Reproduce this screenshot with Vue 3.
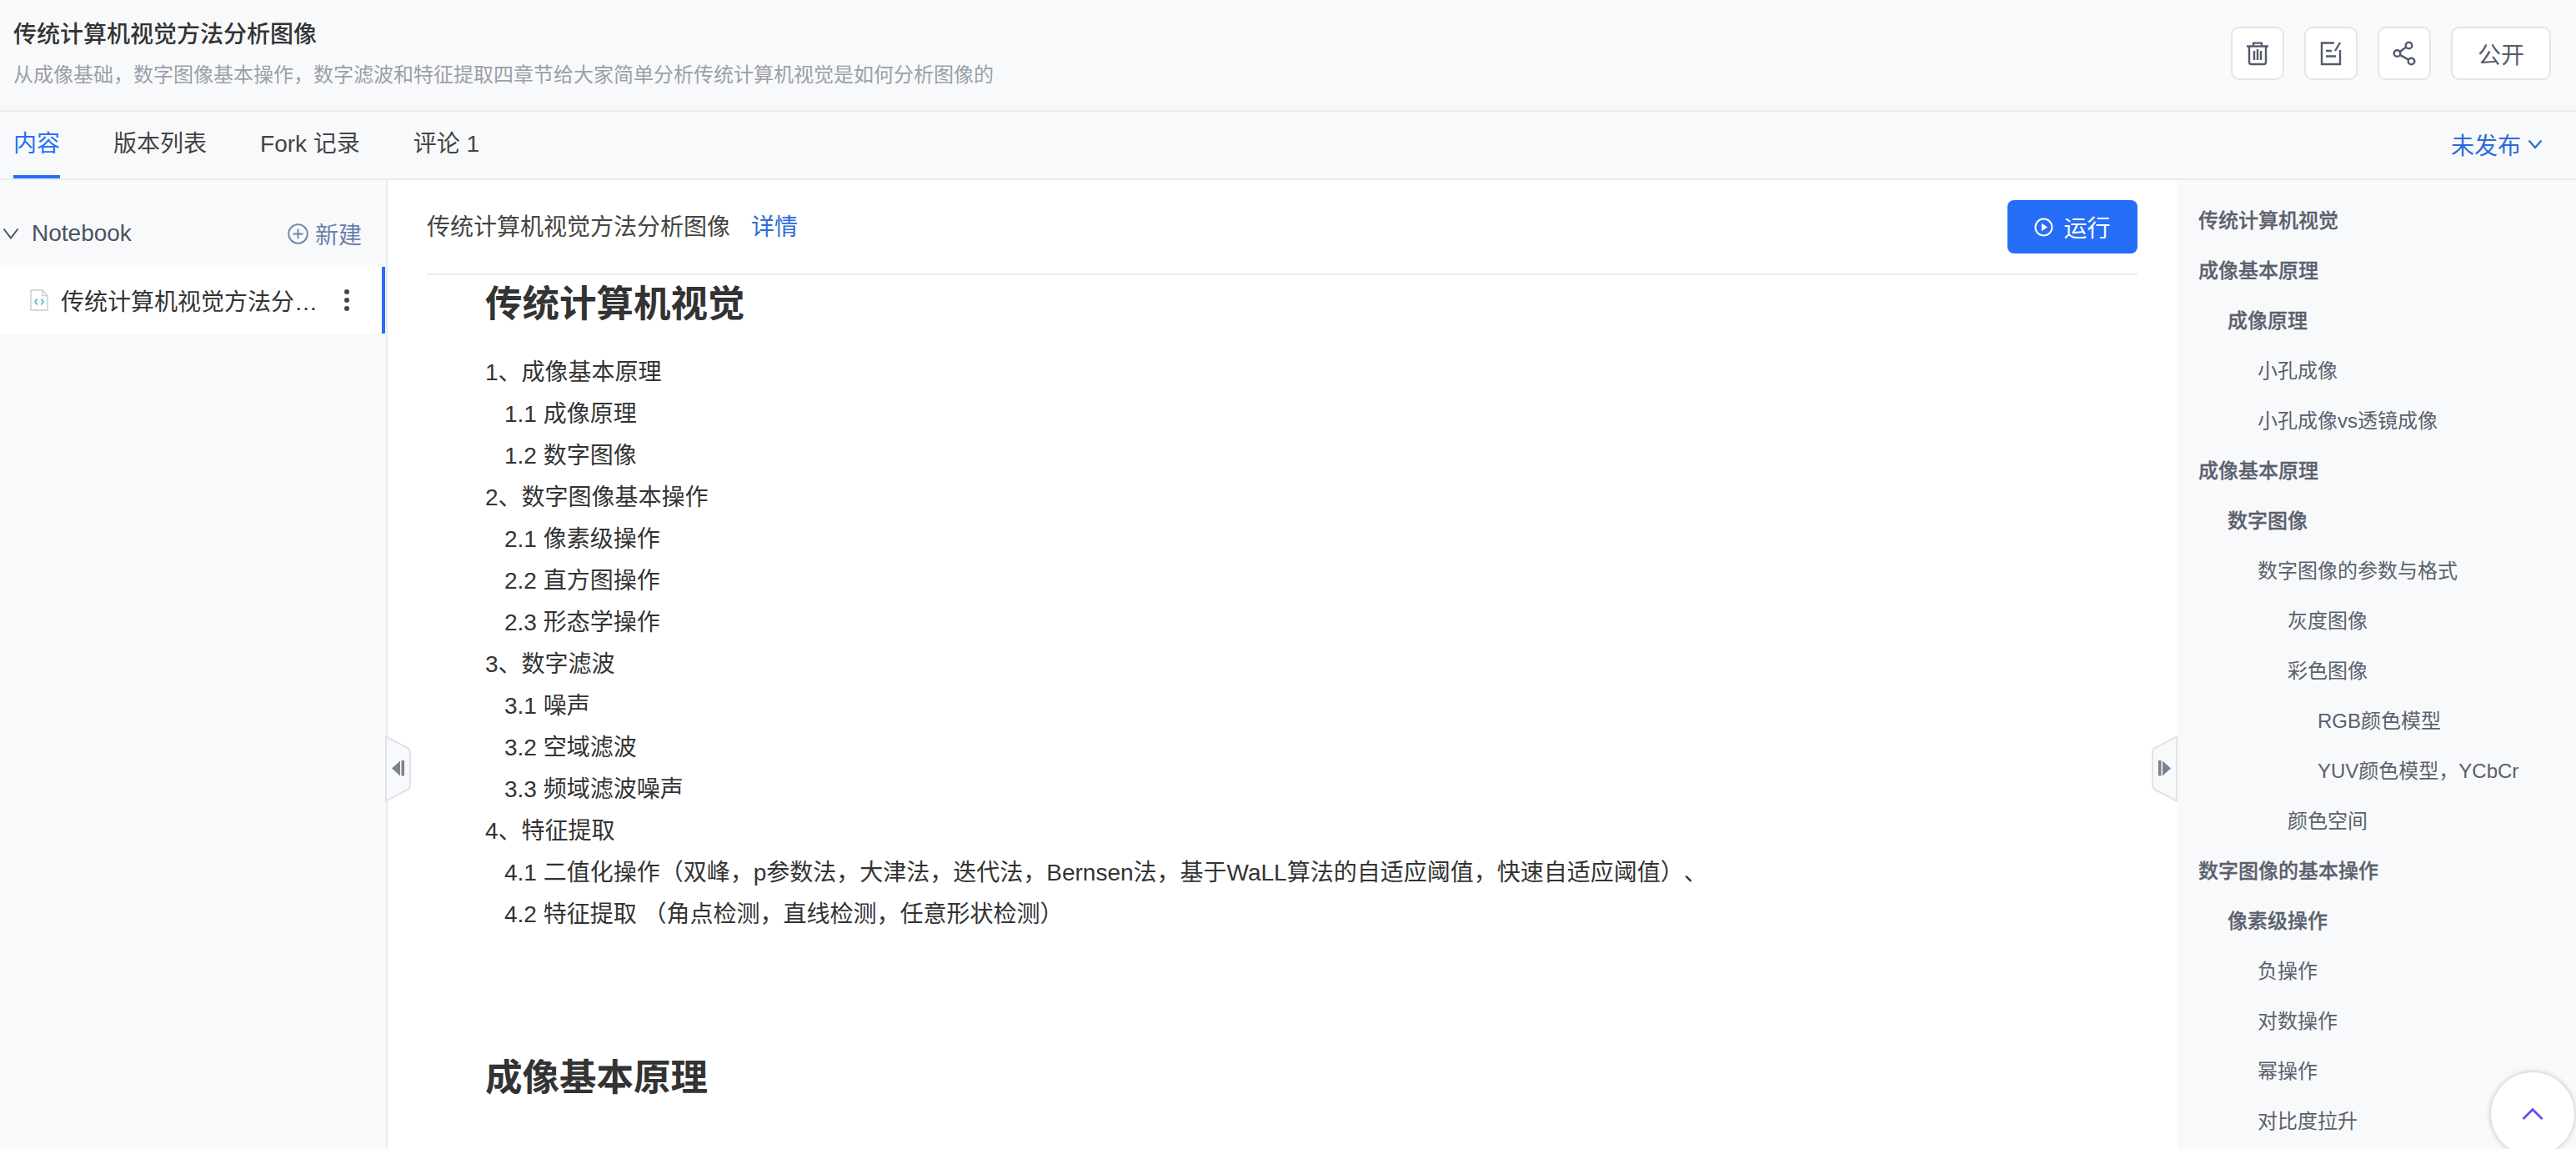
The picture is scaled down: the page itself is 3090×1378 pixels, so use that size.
<script setup>
const tabs = ['内容', '版本列表', 'Fork 记录', '评论 1']
const outline = [
  [0, '1、成像基本原理'], [1, '1.1 成像原理'], [1, '1.2 数字图像'],
  [0, '2、数字图像基本操作'], [1, '2.1 像素级操作'], [1, '2.2 直方图操作'], [1, '2.3 形态学操作'],
  [0, '3、数字滤波'], [1, '3.1 噪声'], [1, '3.2 空域滤波'], [1, '3.3 频域滤波噪声'],
  [0, '4、特征提取'],
  [1, '4.1 二值化操作（双峰，p参数法，大津法，迭代法，Bernsen法，基于WaLL算法的自适应阈值，快速自适应阈值）、'],
  [1, '4.2 特征提取 （角点检测，直线检测，任意形状检测）']
]
const toc = [
  [1, '传统计算机视觉'], [1, '成像基本原理'], [2, '成像原理'], [3, '小孔成像'], [3, '小孔成像vs透镜成像'],
  [1, '成像基本原理'], [2, '数字图像'], [3, '数字图像的参数与格式'], [4, '灰度图像'], [4, '彩色图像'],
  [5, 'RGB颜色模型'], [5, 'YUV颜色模型，YCbCr'], [4, '颜色空间'],
  [1, '数字图像的基本操作'], [2, '像素级操作'], [3, '负操作'], [3, '对数操作'], [3, '幂操作'], [3, '对比度拉升']
]
</script>

<template>
  <div class="page">
    <header class="head">
      <div class="head-text">
        <h1 class="title">传统计算机视觉方法分析图像</h1>
        <p class="desc">从成像基础，数字图像基本操作，数字滤波和特征提取四章节给大家简单分析传统计算机视觉是如何分析图像的</p>
      </div>
      <div class="actions">
        <button class="btn square" aria-label="删除">
          <svg width="28" height="30" viewBox="0 0 28 30" fill="none" stroke="#535a6b" stroke-width="2.4">
            <path d="M1 6.5h26" /><path d="M9 6V2.6h10V6" />
            <path d="M4 7v18.5a2.5 2.5 0 0 0 2.5 2.5h15a2.5 2.5 0 0 0 2.5-2.5V7" />
            <path d="M10 12v11M14 10v13M18 12v11" />
          </svg>
        </button>
        <button class="btn square" aria-label="编辑">
          <svg width="26" height="30" viewBox="0 0 26 30" fill="none" stroke="#535a6b" stroke-width="2.4">
            <path d="M17 2.5H2v25.5h22V11" /><path d="M7 12h7M7 18.5h12" /><path d="M18 12l6-10" />
          </svg>
        </button>
        <button class="btn square" aria-label="分享">
          <svg width="28" height="30" viewBox="0 0 28 30" fill="none" stroke="#535a6b" stroke-width="2.4">
            <circle cx="19.5" cy="5.5" r="3.8" /><circle cx="5.5" cy="15" r="3.8" /><circle cx="22.5" cy="24.5" r="3.8" />
            <path d="M16.3 7.6L8.7 12.9M8.8 16.9l10.4 5.7" />
          </svg>
        </button>
        <button class="btn public">公开</button>
      </div>
    </header>

    <nav class="tabs">
      <a v-for="(t, i) in tabs" :key="t" class="tab" :class="{ active: i === 0 }">{{ t }}</a>
      <div class="status">
        未发布
        <svg width="18" height="12" viewBox="0 0 18 12" fill="none" stroke="#2c6bd8" stroke-width="2.2">
          <path d="M1.5 1.5L9 10l7.5-8.5" />
        </svg>
      </div>
    </nav>

    <div class="body">
      <aside class="side">
        <div class="side-head">
          <svg class="caret" width="20" height="14" viewBox="0 0 20 14" fill="none" stroke="#4a5361" stroke-width="2">
            <path d="M1.5 1.5L10 12.5l8.5-11" />
          </svg>
          <span class="nb">Notebook</span>
          <span class="new">
            <svg width="25" height="25" viewBox="0 0 25 25" fill="none" stroke="#6b80ad" stroke-width="1.8">
              <circle cx="12.5" cy="12.5" r="11.3" /><path d="M12.5 6.5v12M6.5 12.5h12" />
            </svg>
            新建
          </span>
        </div>
        <div class="file">
          <svg class="file-ico" width="22" height="26" viewBox="0 0 22 26" fill="none">
            <path d="M1 1h14l6 6.5V25H1z" fill="#fff" stroke="#c6ccd8" stroke-width="1.4" />
            <path d="M15 1v6.5h6" stroke="#c6ccd8" stroke-width="1.4" />
            <path d="M8.5 11.5L6 15l2.5 3.5M13.5 11.5L16 15l-2.5 3.5" stroke="#49b6d6" stroke-width="1.6" />
          </svg>
          <span class="file-name">传统计算机视觉方法分析图像</span>
          <span class="kebab"><i></i><i></i><i></i></span>
        </div>
      </aside>

      <main class="main">
        <div class="bar">
          <span class="bar-title">传统计算机视觉方法分析图像</span>
          <a class="detail">详情</a>
          <button class="run">
            <svg width="23" height="23" viewBox="0 0 23 23" fill="none">
              <circle cx="11.5" cy="11.5" r="10" stroke="#fff" stroke-width="2" />
              <path d="M9 6.8l7 4.7-7 4.7z" fill="#fff" />
            </svg>
            运行
          </button>
        </div>
        <article class="doc">
          <h2 class="h">传统计算机视觉</h2>
          <ul class="list">
            <li v-for="(o, i) in outline" :key="i" :class="{ sub: o[0] === 1 }">{{ o[1] }}</li>
          </ul>
          <h2 class="h second">成像基本原理</h2>
        </article>
      </main>

      <aside class="toc">
        <div v-for="(t, i) in toc" :key="i" class="toc-row" :class="'lv' + t[0]">{{ t[1] }}</div>
      </aside>
    </div>

    <svg class="handle left" width="32" height="80" viewBox="0 0 32 80" fill="none">
      <path d="M1 1.5L27 15q3 1.6 3 5v40q0 3.4-3 5L1 78.5z" fill="#f8f9fb" stroke="#e1e3e8" stroke-width="2" />
      <path d="M8 39.500l10-9v18z" fill="#7c8291" /><path d="M19.500 30h3.500v18.500h-3.500z" fill="#7c8291" />
    </svg>
    <svg class="handle right" width="32" height="80" viewBox="0 0 32 80" fill="none">
      <path d="M31 1.500L5 15q-3 1.600-3 5v40q0 3.400 3 5l26 13.500z" fill="#f8f9fb" stroke="#e1e3e8" stroke-width="2" />
      <path d="M24 39.500l-10-9v18z" fill="#7c8291" /><path d="M9 30h3.500v18.500H9z" fill="#7c8291" />
    </svg>
    <div class="top">
      <svg width="26" height="16" viewBox="0 0 26 16" fill="none" stroke="#6a4ff5" stroke-width="3">
        <path d="M1.500 14L13 2.500 24.500 14" />
      </svg>
    </div>
  </div>
</template>

<style scoped>
.page {
  position: relative;
  width: 3090px;
  height: 1378px;
  overflow: hidden;
  background: #f8f9fb;
  font-family: "Liberation Sans", "Noto Sans CJK SC", sans-serif;
  font-size: 28px;
  color: #333;
  text-spacing-trim: space-all;
}
.head {
  height: 134px;
  box-sizing: border-box;
  border-bottom: 2px solid #e9ebee;
  display: flex;
  align-items: flex-start;
  justify-content: space-between;
  padding: 0 30px 0 16px;
}
.title {
  margin: 24px 0 0;
  font-size: 28px;
  line-height: 36px;
  font-weight: 500;
  color: #333;
}
.desc {
  margin: 14px 0 0;
  font-size: 24px;
  line-height: 32px;
  color: #9a9fa8;
}
.actions {
  display: flex;
  gap: 24px;
  padding-top: 32px;
}
.btn {
  box-sizing: border-box;
  height: 64px;
  background: #fff;
  border: 2px solid #e3e5ea;
  border-radius: 10px;
  padding: 0;
  display: flex;
  align-items: center;
  justify-content: center;
  font: inherit;
  color: #545b69;
}
.square { width: 64px; }
.public { width: 120px; }
.tabs {
  height: 82px;
  box-sizing: border-box;
  border-bottom: 2px solid #e9ebee;
  display: flex;
  gap: 64px;
  padding: 0 40px 0 16px;
}
.tab {
  height: 80px;
  box-sizing: border-box;
  padding-top: 20px;
  line-height: 38px;
  border-bottom: 4px solid transparent;
  color: #444;
}
.tab.active {
  color: #266ef7;
  border-bottom-color: #266ef7;
}
.status {
  margin-left: auto;
  height: 80px;
  box-sizing: border-box;
  padding-bottom: 2px;
  display: flex;
  align-items: center;
  gap: 8px;
  color: #2c6bd8;
}
.body {
  display: grid;
  grid-template-columns: 465px 1fr 478px;
  height: 1162px;
}
.side { border-right: 2px solid #e9ebee; }
.side-head {
  height: 104px;
  box-sizing: border-box;
  padding: 24px 29px 0 3px;
  display: flex;
  align-items: center;
}
.caret { margin-right: 15px; }
.nb { color: #4a5361; }
.new {
  margin-left: auto;
  display: flex;
  align-items: center;
  gap: 8px;
  color: #6b80ad;
}
.file {
  width: 462px;
  height: 80px;
  box-sizing: border-box;
  background: #fff;
  border-right: 4px solid #266ef7;
  padding-left: 36px;
  display: flex;
  align-items: center;
}
.file-ico { flex: none; margin-right: 15px; }
.file-name {
  width: 310px;
  white-space: nowrap;
  overflow: hidden;
  text-overflow: ellipsis;
  color: #333;
}
.kebab {
  margin-left: 30px;
  display: flex;
  flex-direction: column;
  gap: 4px;
}
.kebab i {
  display: block;
  width: 6px;
  height: 6px;
  border-radius: 50%;
  background: #444;
}
.main {
  background: #fff;
  padding: 0 48px 0 47px;
  min-width: 0;
}
.bar {
  height: 114px;
  box-sizing: border-box;
  border-bottom: 2px solid #e9ebee;
  display: flex;
  align-items: flex-start;
  padding-top: 25px;
}
.bar-title, .detail { line-height: 64px; }
.bar-title { color: #444; }
.detail { margin-left: 25px; color: #2c6bd8; }
.run {
  margin-left: auto;
  margin-top: -1px;
  width: 156px;
  height: 64px;
  border: 0;
  border-radius: 8px;
  background: #266ef7;
  color: #fff;
  font: inherit;
  display: flex;
  align-items: center;
  justify-content: center;
  gap: 12px;
}
.doc { padding-left: 70px; padding-top: 2px; }
.h {
  margin: 0;
  font-size: 44.5px;
  line-height: 66px;
  font-weight: 700;
  color: #333;
}
.second { margin-top: 138px; }
.list {
  list-style: none;
  margin: 24px 0 0;
  padding: 0;
}
.list li {
  height: 50px;
  line-height: 50px;
  white-space: nowrap;
  color: #333;
}
.list li.sub { padding-left: 23px; }
.toc {
  padding: 19px 0 0 25px;
  min-width: 0;
}
.toc-row {
  height: 60px;
  line-height: 60px;
  font-size: 24px;
  color: #5a616d;
  white-space: nowrap;
}
.lv1, .lv2 { font-weight: 500; -webkit-text-stroke: 0.3px #5a616d; }
.lv2 { padding-left: 35px; }
.lv3 { padding-left: 71px; }
.lv4 { padding-left: 107px; }
.lv5 { padding-left: 143px; }
.handle {
  position: absolute;
  top: 882px;
}
.handle.left { left: 462px; }
.handle.right { left: 2580px; }
.top {
  position: absolute;
  left: 2988px;
  top: 1286px;
  width: 100px;
  height: 100px;
  border-radius: 50%;
  background: #fff;
  box-shadow: 0 0 6px rgba(0, 0, 0, 0.25);
  display: flex;
  align-items: center;
  justify-content: center;
}
</style>
